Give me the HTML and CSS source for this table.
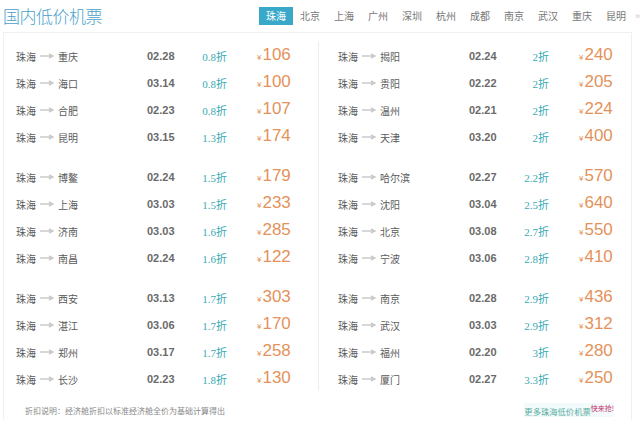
FILE: index.html
```html
<!DOCTYPE html>
<html lang="zh">
<head>
<meta charset="utf-8">
<title>国内低价机票</title>
<link rel="stylesheet" href="styles.css">
</head>
<body>
<div class="page">
  <header class="top">
    <h1 class="title">国内低价机票</h1>
    <nav class="tabs">
      <span class="tab active">珠海</span>
      <span class="tab">北京</span>
      <span class="tab">上海</span>
      <span class="tab">广州</span>
      <span class="tab">深圳</span>
      <span class="tab">杭州</span>
      <span class="tab">成都</span>
      <span class="tab">南京</span>
      <span class="tab">武汉</span>
      <span class="tab">重庆</span>
      <span class="tab">昆明</span>
      <span class="tab-more">»</span>
    </nav>
  </header>
  <section class="panel">
    <div class="cols">
      <div class="col col-left">
        <div class="group">
          <div class="row"><span class="route">珠海<svg class="arrow" viewBox="0 0 14 6"><path d="M0 3H12M9 1L13 3L9 5" /></svg>重庆</span><span class="date">02.28</span><span class="disc">0.8折</span><span class="price"><i>¥</i>106</span></div>
          <div class="row"><span class="route">珠海<svg class="arrow" viewBox="0 0 14 6"><path d="M0 3H12M9 1L13 3L9 5" /></svg>海口</span><span class="date">03.14</span><span class="disc">0.8折</span><span class="price"><i>¥</i>100</span></div>
          <div class="row"><span class="route">珠海<svg class="arrow" viewBox="0 0 14 6"><path d="M0 3H12M9 1L13 3L9 5" /></svg>合肥</span><span class="date">02.23</span><span class="disc">0.8折</span><span class="price"><i>¥</i>107</span></div>
          <div class="row"><span class="route">珠海<svg class="arrow" viewBox="0 0 14 6"><path d="M0 3H12M9 1L13 3L9 5" /></svg>昆明</span><span class="date">03.15</span><span class="disc">1.3折</span><span class="price"><i>¥</i>174</span></div>
        </div>
        <div class="group">
          <div class="row"><span class="route">珠海<svg class="arrow" viewBox="0 0 14 6"><path d="M0 3H12M9 1L13 3L9 5" /></svg>博鳌</span><span class="date">02.24</span><span class="disc">1.5折</span><span class="price"><i>¥</i>179</span></div>
          <div class="row"><span class="route">珠海<svg class="arrow" viewBox="0 0 14 6"><path d="M0 3H12M9 1L13 3L9 5" /></svg>上海</span><span class="date">03.03</span><span class="disc">1.5折</span><span class="price"><i>¥</i>233</span></div>
          <div class="row"><span class="route">珠海<svg class="arrow" viewBox="0 0 14 6"><path d="M0 3H12M9 1L13 3L9 5" /></svg>济南</span><span class="date">03.03</span><span class="disc">1.6折</span><span class="price"><i>¥</i>285</span></div>
          <div class="row"><span class="route">珠海<svg class="arrow" viewBox="0 0 14 6"><path d="M0 3H12M9 1L13 3L9 5" /></svg>南昌</span><span class="date">02.24</span><span class="disc">1.6折</span><span class="price"><i>¥</i>122</span></div>
        </div>
        <div class="group">
          <div class="row"><span class="route">珠海<svg class="arrow" viewBox="0 0 14 6"><path d="M0 3H12M9 1L13 3L9 5" /></svg>西安</span><span class="date">03.13</span><span class="disc">1.7折</span><span class="price"><i>¥</i>303</span></div>
          <div class="row"><span class="route">珠海<svg class="arrow" viewBox="0 0 14 6"><path d="M0 3H12M9 1L13 3L9 5" /></svg>湛江</span><span class="date">03.06</span><span class="disc">1.7折</span><span class="price"><i>¥</i>170</span></div>
          <div class="row"><span class="route">珠海<svg class="arrow" viewBox="0 0 14 6"><path d="M0 3H12M9 1L13 3L9 5" /></svg>郑州</span><span class="date">03.17</span><span class="disc">1.7折</span><span class="price"><i>¥</i>258</span></div>
          <div class="row"><span class="route">珠海<svg class="arrow" viewBox="0 0 14 6"><path d="M0 3H12M9 1L13 3L9 5" /></svg>长沙</span><span class="date">02.23</span><span class="disc">1.8折</span><span class="price"><i>¥</i>130</span></div>
        </div>
      </div>
      <div class="col col-right">
        <div class="group">
          <div class="row"><span class="route">珠海<svg class="arrow" viewBox="0 0 14 6"><path d="M0 3H12M9 1L13 3L9 5" /></svg>揭阳</span><span class="date">02.24</span><span class="disc">2折</span><span class="price"><i>¥</i>240</span></div>
          <div class="row"><span class="route">珠海<svg class="arrow" viewBox="0 0 14 6"><path d="M0 3H12M9 1L13 3L9 5" /></svg>贵阳</span><span class="date">02.22</span><span class="disc">2折</span><span class="price"><i>¥</i>205</span></div>
          <div class="row"><span class="route">珠海<svg class="arrow" viewBox="0 0 14 6"><path d="M0 3H12M9 1L13 3L9 5" /></svg>温州</span><span class="date">02.21</span><span class="disc">2折</span><span class="price"><i>¥</i>224</span></div>
          <div class="row"><span class="route">珠海<svg class="arrow" viewBox="0 0 14 6"><path d="M0 3H12M9 1L13 3L9 5" /></svg>天津</span><span class="date">03.20</span><span class="disc">2折</span><span class="price"><i>¥</i>400</span></div>
        </div>
        <div class="group">
          <div class="row"><span class="route">珠海<svg class="arrow" viewBox="0 0 14 6"><path d="M0 3H12M9 1L13 3L9 5" /></svg>哈尔滨</span><span class="date">02.27</span><span class="disc">2.2折</span><span class="price"><i>¥</i>570</span></div>
          <div class="row"><span class="route">珠海<svg class="arrow" viewBox="0 0 14 6"><path d="M0 3H12M9 1L13 3L9 5" /></svg>沈阳</span><span class="date">03.04</span><span class="disc">2.5折</span><span class="price"><i>¥</i>640</span></div>
          <div class="row"><span class="route">珠海<svg class="arrow" viewBox="0 0 14 6"><path d="M0 3H12M9 1L13 3L9 5" /></svg>北京</span><span class="date">03.08</span><span class="disc">2.7折</span><span class="price"><i>¥</i>550</span></div>
          <div class="row"><span class="route">珠海<svg class="arrow" viewBox="0 0 14 6"><path d="M0 3H12M9 1L13 3L9 5" /></svg>宁波</span><span class="date">03.06</span><span class="disc">2.8折</span><span class="price"><i>¥</i>410</span></div>
        </div>
        <div class="group">
          <div class="row"><span class="route">珠海<svg class="arrow" viewBox="0 0 14 6"><path d="M0 3H12M9 1L13 3L9 5" /></svg>南京</span><span class="date">02.28</span><span class="disc">2.9折</span><span class="price"><i>¥</i>436</span></div>
          <div class="row"><span class="route">珠海<svg class="arrow" viewBox="0 0 14 6"><path d="M0 3H12M9 1L13 3L9 5" /></svg>武汉</span><span class="date">03.03</span><span class="disc">2.9折</span><span class="price"><i>¥</i>312</span></div>
          <div class="row"><span class="route">珠海<svg class="arrow" viewBox="0 0 14 6"><path d="M0 3H12M9 1L13 3L9 5" /></svg>福州</span><span class="date">02.20</span><span class="disc">3折</span><span class="price"><i>¥</i>280</span></div>
          <div class="row"><span class="route">珠海<svg class="arrow" viewBox="0 0 14 6"><path d="M0 3H12M9 1L13 3L9 5" /></svg>厦门</span><span class="date">02.27</span><span class="disc">3.3折</span><span class="price"><i>¥</i>250</span></div>
        </div>
      </div>
    </div>
    <footer class="foot">
      <span class="note">折扣说明：经济舱折扣以标准经济舱全价为基础计算得出</span>
      <a class="more-link">更多珠海低价机票<sup class="hot">快来抢!</sup></a>
    </footer>
  </section>
</div>
</body>
</html>
```

FILE: styles.css
```css
html, body {
  margin: 0;
  padding: 0;
  background: #fff;
}

body {
  font-family: "Liberation Sans", "Noto Sans CJK SC", sans-serif;
  color: #555;
}

.page {
  width: 640px;
  height: 432px;
  overflow: hidden;
}

.top {
  display: flex;
  align-items: center;
  height: 32px;
  padding-left: 3px;
  overflow: hidden;
}

.title {
  flex: 0 0 256px;
  margin: 0;
  font-family: "Noto Sans CJK SC", sans-serif;
  font-size: 17px;
  font-weight: 300;
  letter-spacing: -0.5px;
  color: #4a9fcc;
  line-height: 32px;
}

.tabs {
  display: flex;
  align-items: center;
  white-space: nowrap;
}

.tab {
  padding: 0 7px;
  font-family: "Noto Sans CJK SC", sans-serif;
  font-size: 10px;
  line-height: 18px;
  color: #777;
}

.tab.active {
  background: #3aa8c8;
  color: #fff;
}

.tab-more {
  padding-left: 2px;
  font-size: 9px;
  color: #c4c4c4;
}

.panel {
  margin: 0 8px 0 3px;
  border: 1px solid #f0f0f0;
  border-bottom: none;
  padding-top: 8px;
}

.cols {
  display: grid;
  grid-template-columns: 314px 1fr;
}

.col-left {
  padding-left: 12px;
}

.col-right {
  border-left: 1px solid #ededed;
  padding-left: 19px;
}

.group + .group {
  margin-top: 13px;
}

.row {
  display: grid;
  grid-template-columns: 131px 50px 30px 30px 1fr;
  align-items: center;
  height: 27px;
}

.route {
  display: flex;
  align-items: center;
  font-family: "Noto Sans CJK SC", sans-serif;
  font-size: 10px;
  color: #5a5a5a;
}

.arrow {
  width: 14px;
  height: 6px;
  margin: 0 4px;
  fill: none;
  stroke: #cacaca;
  stroke-width: 1.4;
}

.date {
  font-size: 11px;
  font-weight: bold;
  color: #6a6a6a;
}

.disc {
  text-align: right;
  font-family: "Liberation Serif", "Noto Sans CJK SC", serif;
  font-size: 11px;
  color: #3aaab4;
}

.price {
  grid-column: 5;
  font-size: 17px;
  line-height: 27px;
  color: #e4925a;
}

.price i {
  font-style: normal;
  font-size: 8px;
  margin-right: 1px;
}

.foot {
  display: flex;
  justify-content: space-between;
  align-items: center;
  height: 20px;
  margin-top: 9px;
  padding: 0 17px 0 21px;
}

.note {
  font-family: "Noto Sans CJK SC", sans-serif;
  font-size: 8px;
  color: #888;
}

.more-link {
  font-family: "Noto Sans CJK SC", sans-serif;
  font-size: 8.3px;
  color: #5aaea2;
  background: #f3fafb;
}

.hot {
  font-size: 7px;
  color: #c2306a;
  vertical-align: 4px;
}
```
